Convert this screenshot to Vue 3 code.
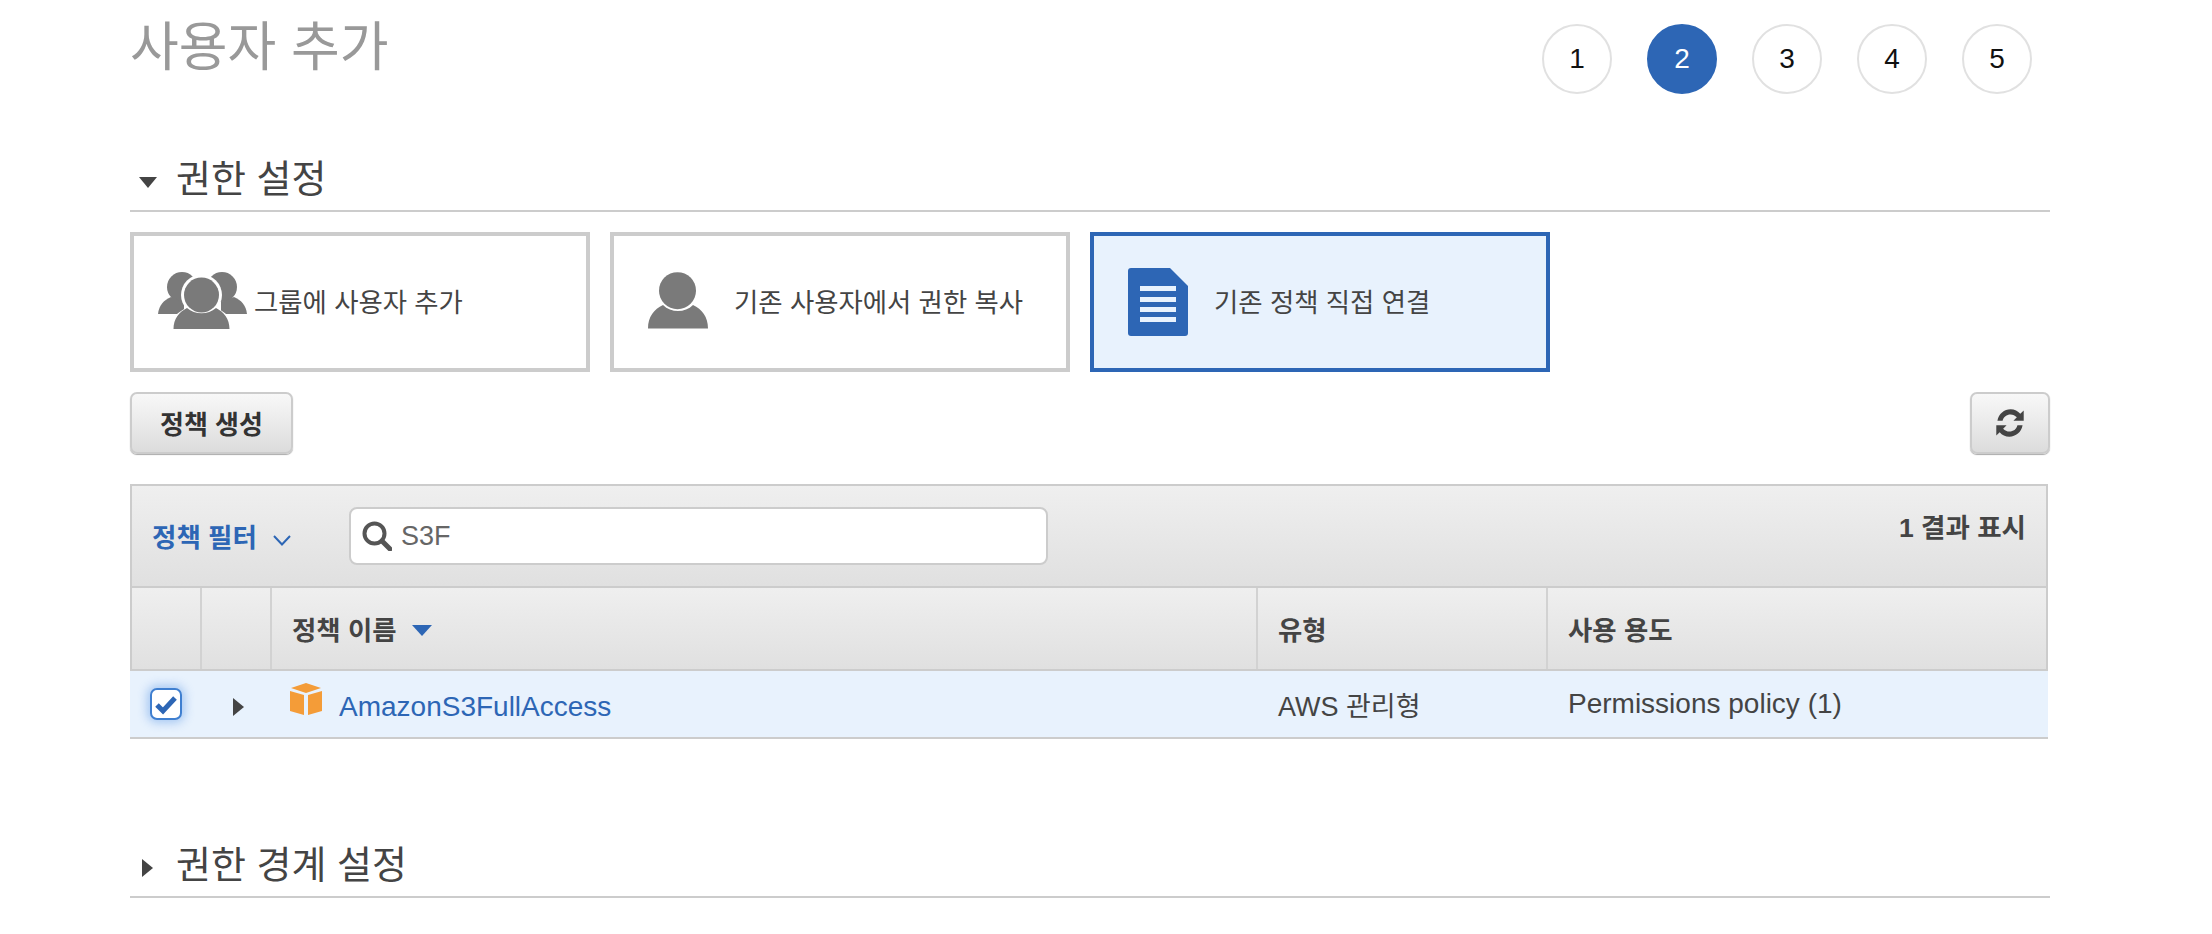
<script setup>
const steps = [1, 2, 3, 4, 5]
</script>

<template>
  <div class="page">
    <header class="top">
      <h1 class="title">사용자 추가</h1>
      <ol class="steps">
        <li v-for="s in steps" :key="s" class="step" :class="{ active: s === 2 }">{{ s }}</li>
      </ol>
    </header>

    <section class="section-head">
      <svg class="caret-down" viewBox="0 0 18 11"><path d="M0 0H18L9 11Z" /></svg>
      <h2>권한 설정</h2>
    </section>

    <div class="cards">
      <div class="card">
        <svg class="ic-group" viewBox="0 0 89 57">
          <circle cx="24" cy="15" r="15" fill="#7a7a7a" />
          <circle cx="64" cy="15" r="15" fill="#7a7a7a" />
          <path d="M0 42C1 33 6 28 13 25L26 30V42Z" fill="#7a7a7a" />
          <path d="M89 42C88 33 83 28 76 25L63 30V42Z" fill="#7a7a7a" />
          <circle cx="43.500" cy="23" r="20.500" fill="#fff" />
          <path d="M12 58C12 44 26 33 43.500 33S75 44 75 58Z" fill="#fff" />
          <circle cx="43.500" cy="23" r="17.500" fill="#7a7a7a" />
          <path d="M15.500 57C15.500 47 21 40 29 36C37 43 50 43 58 36C66 40 71.500 47 71.500 57Z" fill="#7a7a7a" />
        </svg>
        <span class="card-text first">그룹에 사용자 추가</span>
      </div>
      <div class="card">
        <svg class="ic-user" viewBox="0 0 60 57">
          <circle cx="29.500" cy="18.700" r="18.500" fill="#7a7a7a" />
          <path d="M0 56.500C0 45 6 37 15 33C23 41 37 41 45 33C54 37 60 45 60 56.500Z" fill="#7a7a7a" />
        </svg>
        <span class="card-text">기존 사용자에서 권한 복사</span>
      </div>
      <div class="card selected">
        <svg class="ic-doc" viewBox="0 0 60 68">
          <path d="M3 0H42L60 18V65Q60 68 57 68H3Q0 68 0 65V3Q0 0 3 0Z" fill="#2d66b5" />
          <path d="M12 18H48V23H12ZM12 29H48V34H12ZM12 39H48V44H12ZM12 49H48V54H12Z" fill="#e8f2fd" />
        </svg>
        <span class="card-text">기존 정책 직접 연결</span>
      </div>
    </div>

    <div class="actions">
      <button class="btn create"><span class="btn-label">정책 생성</span></button>
      <button class="btn refresh" aria-label="새로 고침">
        <svg viewBox="0 0 28 28" width="32" height="32">
          <path d="M3 12C4 6 9 2 14.500 2C18 2 21 3.500 23 6L26 3V12H17L20 9C18.500 7.500 16.500 6.500 14.500 6.500C11 6.500 8.500 8.500 7.500 12Z" fill="#444" />
          <path d="M25 16C24 22 19 26 13.500 26C10 26 7 24.500 5 22L2 25V16H11L8 19C9.500 20.500 11.500 21.500 13.500 21.500C17 21.500 19.500 19.500 20.500 16Z" fill="#444" />
        </svg>
      </button>
    </div>

    <div class="table">
      <div class="toolbar">
        <span class="filter">정책 필터</span>
        <svg class="chev" viewBox="0 0 18 11"><path d="M1 1L9 9.500L17 1" fill="none" stroke="#2d66b5" stroke-width="2" /></svg>
        <div class="search">
          <svg class="mag" viewBox="0 0 30 30">
            <circle cx="12.500" cy="12.500" r="10" fill="none" stroke="#555" stroke-width="4" />
            <path d="M20 20L28 28" stroke="#555" stroke-width="5" stroke-linecap="round" />
          </svg>
          <span class="query">S3F</span>
        </div>
        <span class="count">1 결과 표시</span>
      </div>
      <div class="grid head">
        <div class="th"></div>
        <div class="th"></div>
        <div class="th pad">정책 이름<svg class="sort" viewBox="0 0 20 11"><path d="M0 0H20L10 11Z" fill="#2d66b5" /></svg></div>
        <div class="th pad">유형</div>
        <div class="th pad">사용 용도</div>
      </div>
      <div class="grid row">
        <div class="td center">
          <span class="check">
            <svg viewBox="0 0 24 24" width="24" height="24"><path d="M3 13L9 19L21 6" fill="none" stroke="#2d66b5" stroke-width="5" /></svg>
          </span>
        </div>
        <div class="td center">
          <svg class="caret-right" viewBox="0 0 11 18"><path d="M0 0L11 9L0 18Z" fill="#444" /></svg>
        </div>
        <div class="td name">
          <svg class="box" viewBox="0 0 32 32">
            <path d="M16 0L31 5L16 10L1 5Z" fill="#f49c38" />
            <path d="M0 8L14 12V32L0 28Z" fill="#f49c38" />
            <path d="M32 8L18 12V32L32 28Z" fill="#f49c38" />
          </svg>
          <a class="link">AmazonS3FullAccess</a>
        </div>
        <div class="td pad type">AWS 관리형</div>
        <div class="td pad usage">Permissions policy (1)</div>
      </div>
    </div>

    <section class="section-head second">
      <svg class="caret-side" viewBox="0 0 11 18"><path d="M0 0L11 9L0 18Z" /></svg>
      <h2>권한 경계 설정</h2>
    </section>
  </div>
</template>

<style>
html, body { margin: 0; background: #fff; }
</style>

<style scoped>
.page {
  box-sizing: border-box;
  width: 2212px;
  height: 934px;
  overflow: hidden;
  padding: 0 162px 0 130px;
  font-family: "Liberation Sans", "Noto Sans CJK KR", sans-serif;
  color: #444;
}
.top {
  display: flex;
  justify-content: space-between;
  height: 150px;
}
.title {
  margin: 12px 0 0;
  font-size: 53px;
  line-height: 72px;
  font-weight: 400;
  color: #999;
}
.steps {
  display: flex;
  gap: 35px;
  list-style: none;
  margin: 24px 18px 0 0;
  padding: 0;
  height: 70px;
}
.step {
  box-sizing: border-box;
  width: 70px;
  height: 70px;
  border: 2px solid #e1e1e1;
  border-radius: 50%;
  display: flex;
  align-items: center;
  justify-content: center;
  font-size: 28px;
  color: #111;
}
.step.active {
  background: #2d66b5;
  border-color: #2d66b5;
  color: #fff;
}
.section-head {
  box-sizing: border-box;
  height: 62px;
  border-bottom: 2px solid #ccc;
  display: flex;
  align-items: center;
}
.section-head h2 {
  margin: -2px 0 0 19px;
  font-size: 38px;
  line-height: 50px;
  font-weight: 400;
  color: #444;
}
.caret-down { width: 18px; height: 11px; margin-left: 9px; margin-top: 4px; fill: #444; }
.caret-side { width: 11px; height: 18px; margin-left: 12px; margin-top: 4px; fill: #444; }
.second h2 { margin-left: 23px; }
.cards {
  display: flex;
  gap: 20px;
  margin-top: 20px;
}
.card {
  box-sizing: border-box;
  width: 460px;
  height: 140px;
  border: 4px solid #ccc;
  display: flex;
  align-items: center;
  background: #fff;
}
.card.selected {
  border-color: #2d66b5;
  background: #e8f2fd;
}
.card-text { font-size: 26.400px; color: #444; margin: -4px 0 0 6px; }
.card-text.first { margin-left: 7px; }
.ic-group { width: 89px; height: 57px; margin-left: 24px; margin-top: -4px; }
.ic-user { width: 60px; height: 57px; margin-left: 34px; margin-right: 20px; margin-top: -4px; }
.ic-doc { width: 60px; height: 68px; margin-left: 34px; margin-right: 20px; }
.actions {
  display: flex;
  justify-content: space-between;
  margin-top: 20px;
  height: 62px;
}
.btn {
  box-sizing: border-box;
  height: 62px;
  border: 2px solid #ccc;
  border-radius: 7px;
  background: linear-gradient(#f8f8f8, #dcdcdc);
  box-shadow: 0 1px 1px #aaa;
  color: #333;
  font-family: inherit;
  font-size: 26px;
  font-weight: 700;
  padding: 0;
  display: flex;
  align-items: center;
  justify-content: center;
}
.btn-label { margin-top: -2px; }
.create { width: 163px; }
.refresh { width: 80px; }
.table {
  margin: 30px 2px 0 0;
  height: 255px;
}
.toolbar {
  box-sizing: border-box;
  height: 104px;
  border: 2px solid #ccc;
  background: linear-gradient(#efefef, #e0e0e0);
  display: flex;
  align-items: flex-start;
  padding: 0 20px;
}
.filter {
  font-size: 26.500px;
  font-weight: 700;
  color: #2d66b5;
  line-height: 36px;
  margin-top: 34px;
}
.chev { width: 18px; height: 11px; margin: 49px 0 0 16px; }
.search {
  box-sizing: border-box;
  width: 699px;
  height: 58px;
  margin: 21px 0 0 58px;
  background: #fff;
  border: 2px solid #ccc;
  border-radius: 8px;
  display: flex;
  align-items: center;
  padding-left: 11px;
}
.mag { width: 30px; height: 30px; }
.query { font-size: 27px; color: #666; margin-left: 9px; }
.count {
  margin-left: auto;
  font-size: 26.500px;
  font-weight: 700;
  color: #444;
  line-height: 36px;
  margin-top: 24px;
}
.grid {
  display: grid;
  grid-template-columns: 71px 70px 986px 290px 1fr;
}
.head {
  box-sizing: border-box;
  height: 83px;
  grid-template-columns: 68px 70px 986px 290px 1fr;
  background: linear-gradient(#efefef, #e0e0e0);
  border: 2px solid #ccc;
  border-top: 0;
}
.th {
  display: flex;
  align-items: center;
  font-size: 26.400px;
  font-weight: 700;
  color: #444;
  border-left: 2px solid #d2d2d2;
}
.th:first-child { border-left: 0; }
.sort { width: 20px; height: 11px; margin-left: 16px; margin-top: 3px; }
.pad { padding-left: 20px; }
.row {
  box-sizing: border-box;
  height: 68px;
  background: #e8f2fd;
  border-bottom: 2px solid #ccc;
}
.td {
  display: flex;
  align-items: center;
  font-size: 26px;
  color: #444;
}
.type { font-size: 27px; padding-left: 21px; }
.usage { font-size: 28px; padding-left: 21px; }
.center { justify-content: center; }
.check {
  box-sizing: border-box;
  width: 32px;
  height: 32px;
  margin-left: 1px;
  border: 2px solid #3f7fd0;
  border-radius: 7px;
  background: #fff;
  box-shadow: 0 0 10px 3px rgba(90, 150, 230, .45);
  display: flex;
  align-items: center;
  justify-content: center;
}
.caret-right { width: 11px; height: 18px; margin-left: 4px; margin-top: 6px; }
.name { padding-left: 19px; }
.box { width: 32px; height: 32px; margin-top: -10px; }
.link { color: #2d66b5; font-size: 28px; margin: 5px 0 0 17px; }
.second { margin-top: 97px; height: 62px; }
</style>
